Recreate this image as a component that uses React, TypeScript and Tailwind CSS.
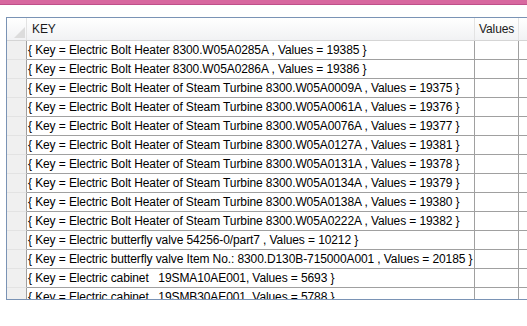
import React from 'react';

const rows: string[] = [
  '{ Key = Electric Bolt Heater 8300.W05A0285A , Values = 19385 }',
  '{ Key = Electric Bolt Heater 8300.W05A0286A , Values = 19386 }',
  '{ Key = Electric Bolt Heater of Steam Turbine 8300.W05A0009A , Values = 19375 }',
  '{ Key = Electric Bolt Heater of Steam Turbine 8300.W05A0061A , Values = 19376 }',
  '{ Key = Electric Bolt Heater of Steam Turbine 8300.W05A0076A , Values = 19377 }',
  '{ Key = Electric Bolt Heater of Steam Turbine 8300.W05A0127A , Values = 19381 }',
  '{ Key = Electric Bolt Heater of Steam Turbine 8300.W05A0131A , Values = 19378 }',
  '{ Key = Electric Bolt Heater of Steam Turbine 8300.W05A0134A , Values = 19379 }',
  '{ Key = Electric Bolt Heater of Steam Turbine 8300.W05A0138A , Values = 19380 }',
  '{ Key = Electric Bolt Heater of Steam Turbine 8300.W05A0222A , Values = 19382 }',
  '{ Key = Electric butterfly valve 54256-0/part7 , Values = 10212 }',
  '{ Key = Electric butterfly valve Item No.: 8300.D130B-715000A001 , Values = 20185 }',
  '{ Key = Electric cabinet   19SMA10AE001, Values = 5693 }',
  '{ Key = Electric cabinet   19SMB30AE001, Values = 5788 }',
];

export default function App() {
  return (
    <div className="w-[527px] h-[326px] overflow-hidden bg-white font-['Liberation_Sans',sans-serif] text-[12px] tracking-[-0.1px] text-black">
      <div className="h-[5px] bg-[#d8689f] border-b border-[#c0508a]" />
      <div className="pl-[6px] pt-[12px]">
        <div className="w-[560px] h-[283px] overflow-hidden border border-[#7a93b5]">
          {/* header */}
          <div className="flex h-[23px] bg-gradient-to-b from-white to-[#f1f2f4] border-b border-[#d5d5d5]">
            <div className="relative w-[20px] shrink-0 border-r border-[#e3e3e3]">
              <div className="absolute right-[1px] bottom-[2px] w-0 h-0 border-l-[11px] border-l-transparent border-b-[11px] border-b-[#dcdcdc]" />
            </div>
            <div className="w-[448px] shrink-0 border-r border-[#e3e3e3] pl-[5px] flex items-center text-[#1a1a1a]">KEY</div>
            <div className="w-[44px] shrink-0 border-r border-[#e3e3e3] pl-[4px] flex items-center text-[#1a1a1a]">Values</div>
            <div className="flex-1" />
          </div>
          {rows.map((r, i) => (
            <div key={i} className="flex h-[19px]">
              <div className="w-[20px] shrink-0 bg-[#f0f0f0] border-r border-[#a0a0a0] border-b border-b-[#e3e3e3]" />
              <div className="w-[448px] shrink-0 border-r border-b border-[#a0a0a0] pl-[1px] flex items-center whitespace-pre overflow-hidden">
                {r}
              </div>
              <div className="w-[44px] shrink-0 border-r border-b border-[#a0a0a0]" />
              <div className="flex-1 border-b border-[#a0a0a0]" />
            </div>
          ))}
        </div>
      </div>
    </div>
  );
}
